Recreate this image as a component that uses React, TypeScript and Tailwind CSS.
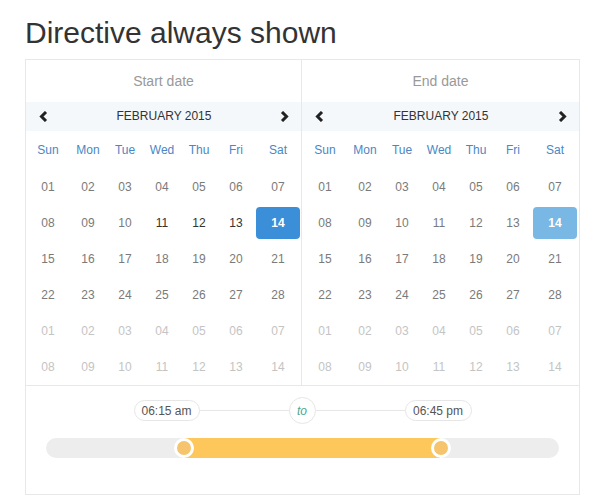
import React from 'react';

const days = ['Sun', 'Mon', 'Tue', 'Wed', 'Thu', 'Fri', 'Sat'];

// 6 weeks shown, last two are next month's days
const weeks: { d: string; muted?: boolean; dark?: boolean; sel?: boolean }[][] = [
  ['01', '02', '03', '04', '05', '06', '07'].map((d) => ({ d })),
  [
    { d: '08' },
    { d: '09' },
    { d: '10' },
    { d: '11', dark: true },
    { d: '12', dark: true },
    { d: '13', dark: true },
    { d: '14', sel: true },
  ],
  ['15', '16', '17', '18', '19', '20', '21'].map((d) => ({ d })),
  ['22', '23', '24', '25', '26', '27', '28'].map((d) => ({ d })),
  ['01', '02', '03', '04', '05', '06', '07'].map((d) => ({ d, muted: true })),
  ['08', '09', '10', '11', '12', '13', '14'].map((d) => ({ d, muted: true })),
];

function Chevron({ right }: { right?: boolean }) {
  return (
    <svg width="9" height="11" viewBox="0 0 9 11" className={right ? 'rotate-180' : ''}>
      <path d="M7 1 L2.5 5.5 L7 10" fill="none" stroke="#222" strokeWidth="3" />
    </svg>
  );
}

function Calendar({ title, end }: { title: string; end?: boolean }) {
  return (
    <div className="flex flex-col">
      <div className="h-[42px] flex items-center justify-center text-[14px] text-[#999]">{title}</div>
      <div className="h-[29px] bg-[#f5f8fa] flex items-center justify-between pl-[13px] pr-[12px]">
        <Chevron />
        <span className="text-[12px] text-[#333] -mt-px">FEBRUARY 2015</span>
        <Chevron right />
      </div>
      <div className={end ? 'pl-[3px]' : 'pl-[2px]'}>
        <div className="grid grid-cols-[40px_40px_34px_40px_34px_40px_44px] h-[38px] items-center text-[12px] text-[#4a87c4] text-center">
          {days.map((d) => (
            <div key={d}>{d}</div>
          ))}
        </div>
        {weeks.map((w, i) => (
          <div key={i} className="grid grid-cols-[40px_40px_34px_40px_34px_40px_44px] h-[36px] text-[12px] text-center">
            {w.map((c, j) =>
              c.sel ? (
                <div
                  key={j}
                  className={`my-[2px] rounded-[4px] flex items-center justify-center font-bold text-white ${
                    end ? 'bg-[#79b7e5]' : 'bg-[#3a8fd8]'
                  }`}
                >
                  {c.d}
                </div>
              ) : (
                <div
                  key={j}
                  className={`flex items-center justify-center ${
                    c.muted ? 'text-[#c4c4c4]' : c.dark && !end ? 'text-[#333]' : 'text-[#7a7a7a]'
                  }`}
                >
                  {c.d}
                </div>
              )
            )}
          </div>
        ))}
      </div>
    </div>
  );
}

export default function App() {
  return (
    <div className="w-[606px] h-[498px] bg-white pl-[25px] pt-[16px] font-['Liberation_Sans',Arial,sans-serif]">
      <h2 className="text-[30px] leading-[33px] text-[#333]">Directive always shown</h2>
      <div className="mt-[10px] w-[555px] h-[436px] border border-[#e8e8e8] flex flex-col">
        <div className="flex border-b border-[#e8e8e8]">
          <div className="w-[276px] border-r border-[#e8e8e8]">
            <Calendar title="Start date" />
          </div>
          <div className="flex-1">
            <Calendar title="End date" end />
          </div>
        </div>
        <div className="flex-1 flex flex-col pt-[11px]">
          <div className="h-[27px] flex items-center justify-center">
            <div className="h-[21px] w-[66px] rounded-full border border-[#e6e6e6] flex items-center justify-center text-[12px] text-[#555]">
              06:15 am
            </div>
            <div className="w-[89px] h-px bg-[#e6e6e6]" />
            <div className="h-[27px] w-[27px] rounded-full border border-[#e6e6e6] flex items-center justify-center text-[12px] italic text-[#4aa592]">
              to
            </div>
            <div className="w-[89px] h-px bg-[#e6e6e6]" />
            <div className="h-[21px] w-[67px] rounded-full border border-[#e6e6e6] flex items-center justify-center text-[12px] text-[#555]">
              06:45 pm
            </div>
          </div>
          <div className="mt-[14px] mx-[20px] h-[20px] rounded-full bg-[#ededed] relative">
            <div className="absolute top-0 bottom-0 left-[138px] w-[257px] bg-[#fec75b]" />
            <div className="absolute top-[0px] left-[128px] w-[20px] h-[20px] rounded-full border-[3px] border-white bg-[#f6c46c]" />
            <div className="absolute top-[0px] left-[385px] w-[20px] h-[20px] rounded-full border-[3px] border-white bg-[#f6c46c]" />
          </div>
        </div>
      </div>
    </div>
  );
}
